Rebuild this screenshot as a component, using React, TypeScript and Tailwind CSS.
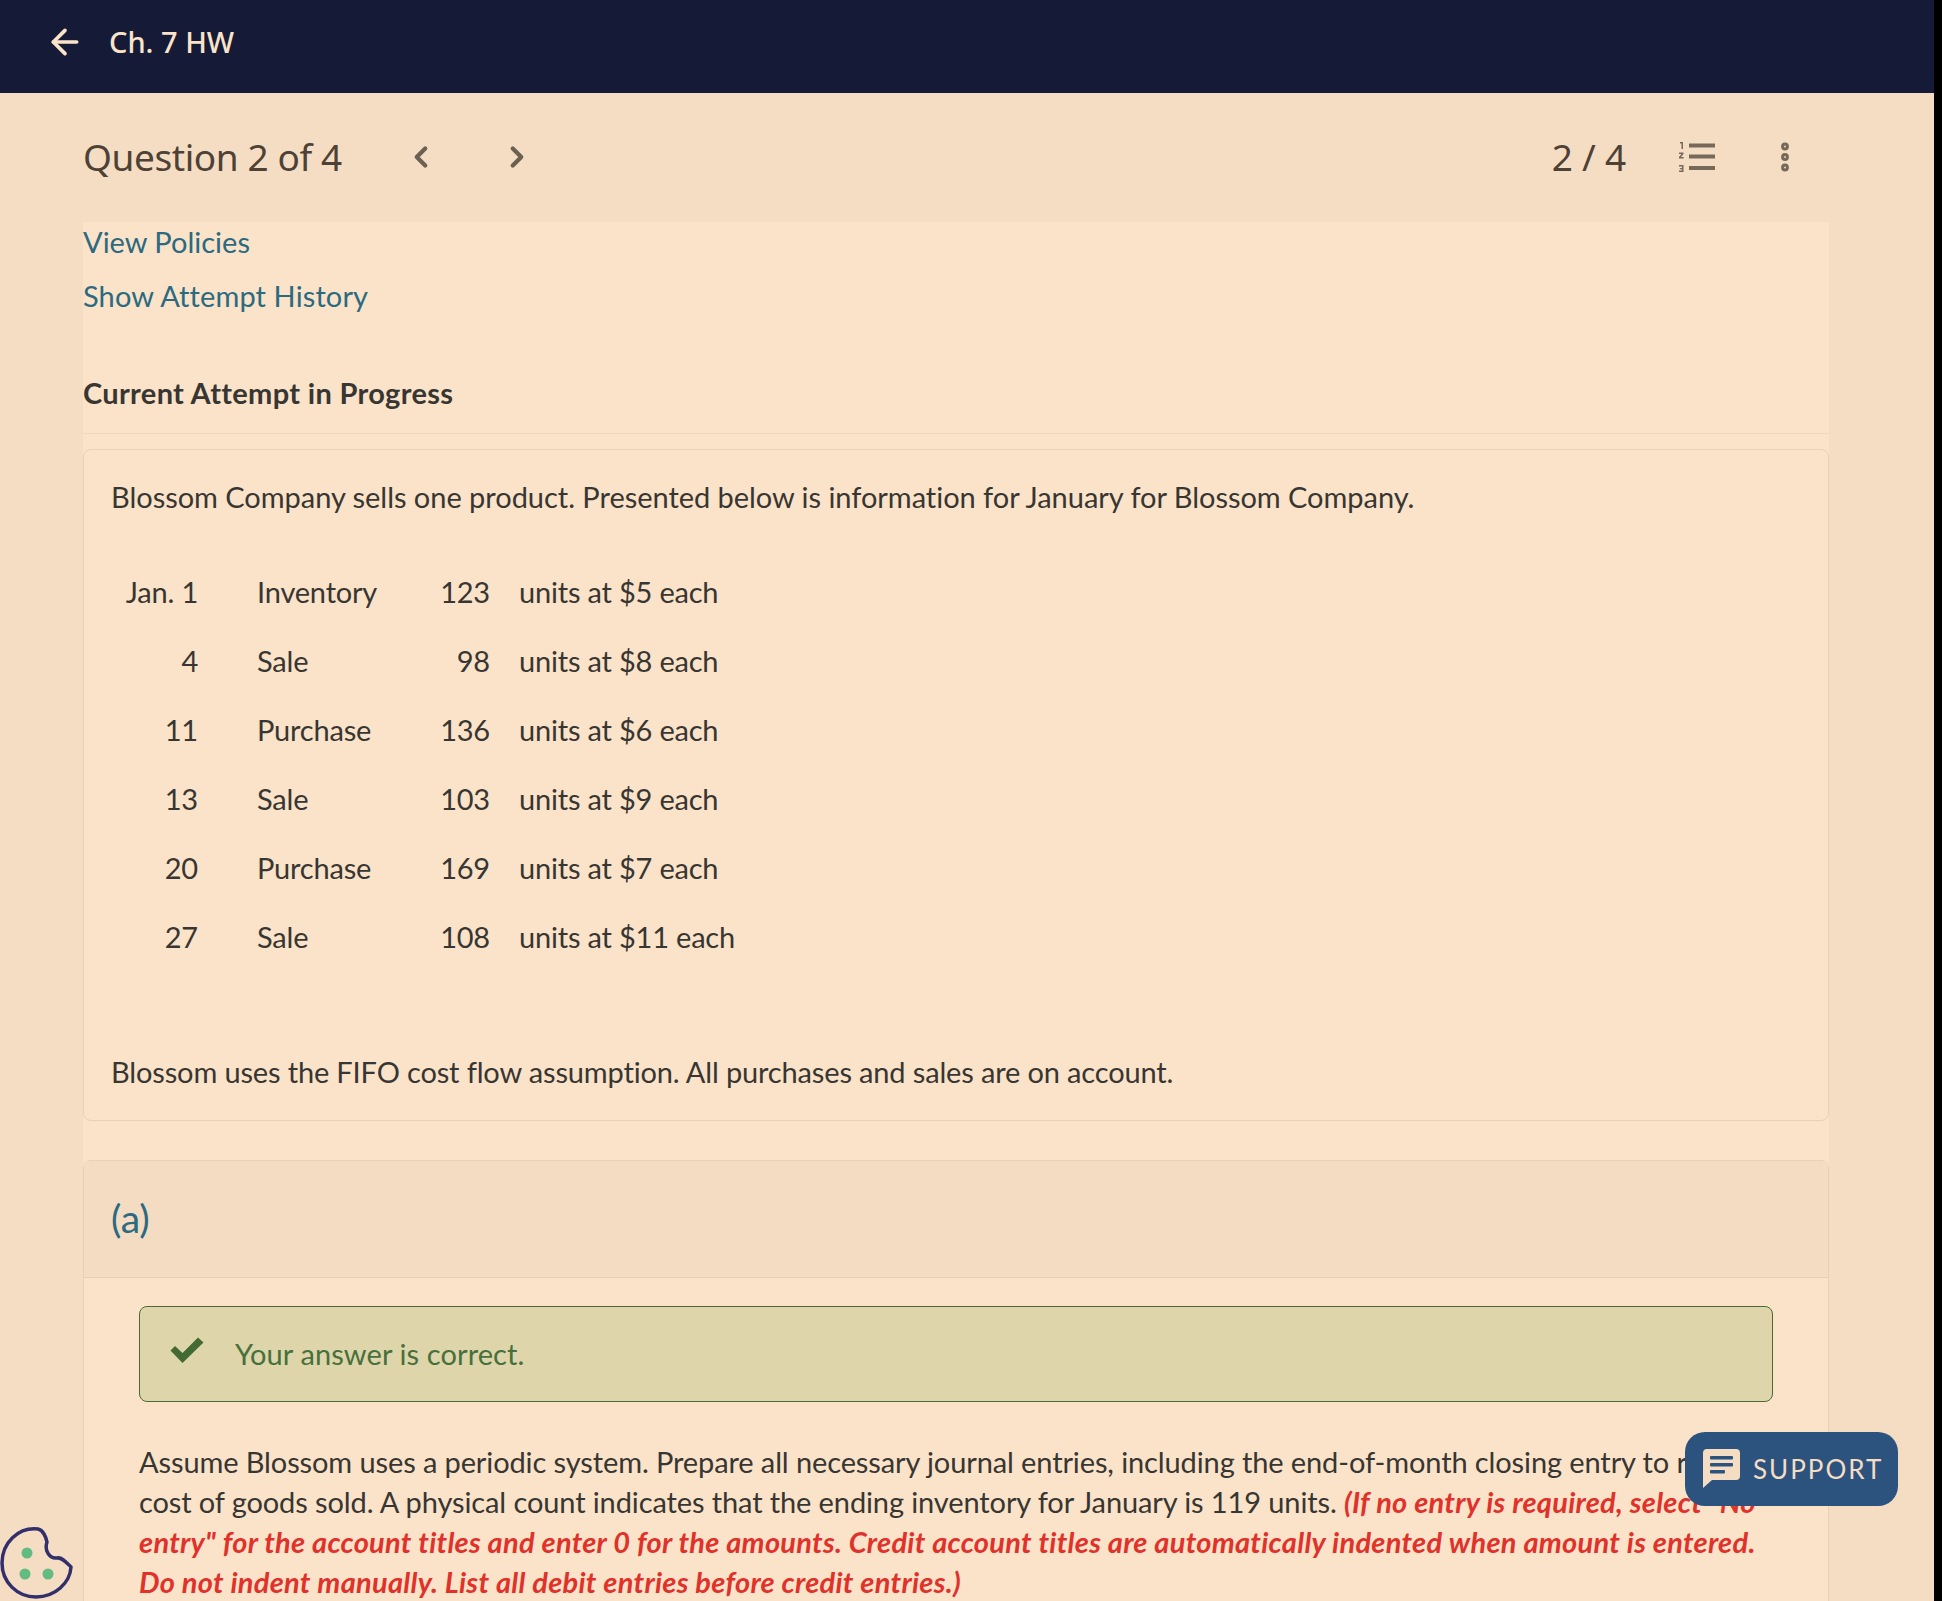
import React from "react";
import { ArrowLeft, ChevronLeft, ChevronRight, EllipsisVertical } from "lucide-react";

const rows = [
  ["Jan. 1", "Inventory", "123", "units at $5 each"],
  ["4", "Sale", "98", "units at $8 each"],
  ["11", "Purchase", "136", "units at $6 each"],
  ["13", "Sale", "103", "units at $9 each"],
  ["20", "Purchase", "169", "units at $7 each"],
  ["27", "Sale", "108", "units at $11 each"],
];

export default function App() {
  return (
    <div className="relative h-[1601px] w-[1942px] overflow-hidden bg-black font-['Lato',sans-serif] text-[29px] text-[#383632] [font-variant-ligatures:none]">
      <div className="h-[1601px] w-[1934px] overflow-hidden bg-[#f5ddc4]">
        <header className="flex h-[93px] items-center bg-[#151b36] pb-[9px] pl-[45px] text-[#fbe3c9]">
          <ArrowLeft className="h-[40px] w-[40px]" strokeWidth={2.2} />
          <span className="ml-[24px] font-['Noto_Sans',sans-serif] text-[29px] font-medium">Ch. 7 HW</span>
        </header>

        <div className="flex h-[129px] items-center pb-[1px] pl-[83px] pr-[131px] text-[#4d4235]">
          <span className="font-['Noto_Sans',sans-serif] text-[37px] font-normal tracking-[-0.4px]">Question 2 of 4</span>
          <ChevronLeft className="ml-[62px] h-[34px] w-[34px] text-[#6b6153]" strokeWidth={3} />
          <ChevronRight className="ml-[62px] h-[34px] w-[34px] text-[#6b6153]" strokeWidth={3} />
          <span className="ml-auto font-['Noto_Sans',sans-serif] text-[37px] font-normal tracking-[-0.2px]">2 / 4</span>
          <svg className="ml-[53px] h-[30px] w-[36px] text-[#76695a]" viewBox="0 0 36 30" fill="currentColor">
            <rect x="10" y="1.500" width="26" height="4" />
            <rect x="10" y="12.500" width="26" height="4" />
            <rect x="10" y="24" width="26" height="4" />
            <path d="M1 0h3v7H2.500V1.500H1zM0 10.500h4.500v1.500L2 15h2.600v1.500H0V15l2.500-3H0zM0 23h4.500v7H0v-1.400h3v-1.400H.8v-1.300H3v-1.400H0z" />
          </svg>
          <EllipsisVertical className="ml-[52px] h-[36px] w-[36px] text-[#76695a]" strokeWidth={3.2} />
        </div>

        <main className="ml-[83px] w-[1746px] bg-[#fbe3c9]">
          <div className="flex h-[212px] flex-col border-b border-[#efd7be]">
            <a className="text-[#2b6a80] leading-[40px]">View Policies</a>
            <a className="mt-[14px] tracking-[0.12px] text-[#2b6a80] leading-[40px]">Show Attempt History</a>
            <h2 className="mt-[57px] font-bold tracking-[0.32px] leading-[40px]">Current Attempt in Progress</h2>
          </div>

          <section className="mt-[15px] h-[672px] rounded-[8px] border border-[#e8d0b5] px-[27px] pt-[27px]">
            <p className="tracking-[-0.035px] leading-[40px]">Blossom Company sells one product. Presented below is information for January for Blossom Company.</p>
            <div className="mt-[40px] grid grid-cols-[87px_auto_auto_auto] justify-start gap-x-0 tracking-[-0.2px]">
              {rows.map((r) => (
                <React.Fragment key={r[0]}>
                  <div className="flex h-[69px] items-center justify-end">{r[0]}</div>
                  <div className="box-content flex h-[69px] w-[160px] items-center pl-[59px]">{r[1]}</div>
                  <div className="flex h-[69px] w-[73px] items-center justify-end">{r[2]}</div>
                  <div className="flex h-[69px] items-center pl-[29px]">{r[3]}</div>
                </React.Fragment>
              ))}
            </div>
            <p className="mt-[81px] tracking-[-0.15px] leading-[40px]">Blossom uses the FIFO cost flow assumption. All purchases and sales are on account.</p>
          </section>

          <section className="mt-[39px] h-[500px] rounded-t-[8px] border-x border-t border-[#e8d0b5]">
            <div className="flex h-[117px] items-center border-b border-[#e8d0b5] bg-[#f3dcc2] pb-[1px] pl-[27px] text-[39px] text-[#2b6a80]">(a)</div>
            <div className="px-[55px] pt-[28px]">
              <div className="flex h-[96px] items-center rounded-[8px] border border-[#4a6b35] bg-[#ded5aa] pl-[30px] text-[#47703c]">
                <svg className="mb-[8px] h-[26px] w-[34px]" viewBox="0 0 34 26" fill="#436a33">
                  <path d="M0.500 13.500 L5 9 L12.500 16 L28 0.500 L33.500 5.500 L12.500 26 Z" strokeLinejoin="round" />
                </svg>
                <span className="ml-[31px] tracking-[0.1px]">Your answer is correct.</span>
              </div>
              <p className="mt-[40px] tracking-[-0.11px] leading-[40px]">
                Assume Blossom uses a periodic system. Prepare all necessary journal entries, including the end-of-month closing entry to record cost of goods sold. A physical count indicates that the ending inventory for January is 119 units.{" "}
                <strong className="font-bold italic tracking-[0.27px] text-[#e0322b]">
                  (If no entry is required, select "No entry" for the account titles and enter 0 for the amounts. Credit account titles are automatically indented when amount is entered. Do not indent manually. List all debit entries before credit entries.)
                </strong>
              </p>
            </div>
          </section>
        </main>
      </div>

      <div className="absolute left-[1685px] top-[1432px] flex h-[74px] w-[213px] items-center rounded-[20px] bg-[#2c527e] pl-[18px] text-[26px] tracking-[2px] text-[#f5ddc4]">
        <svg className="h-[40px] w-[37px]" viewBox="0 0 37 40" fill="#f5ddc4">
          <path d="M4 0 H33 A4 4 0 0 1 37 4 V27 A4 4 0 0 1 33 31 H9 L0 39 V4 A4 4 0 0 1 4 0 Z" />
          <rect x="7" y="7" width="23" height="3.500" fill="#2c527e" rx="1" />
          <rect x="7" y="14" width="23" height="3.500" fill="#2c527e" rx="1" />
          <rect x="7" y="21" width="15" height="3.500" fill="#2c527e" rx="1" />
        </svg>
        <span className="ml-[13px]">SUPPORT</span>
      </div>

      <svg className="absolute left-0 top-[1527px] h-[72px] w-[73px]" viewBox="0 0 73 72" fill="none">
        <path d="M38 2 C18 0 2 16 2 36 C2 55 17 70 36 70 C55 70 70 56 71 40 C66 35 62 30 57 31 C50 32 44 24 47 15 C46 10 43 3 38 2 Z" stroke="#322f6b" strokeWidth="3.500" strokeLinejoin="round" />
        <circle cx="27" cy="26" r="5.500" fill="#62bb81" />
        <circle cx="25" cy="47" r="5.500" fill="#62bb81" />
        <circle cx="48" cy="47" r="5.500" fill="#62bb81" />
      </svg>
    </div>
  );
}
